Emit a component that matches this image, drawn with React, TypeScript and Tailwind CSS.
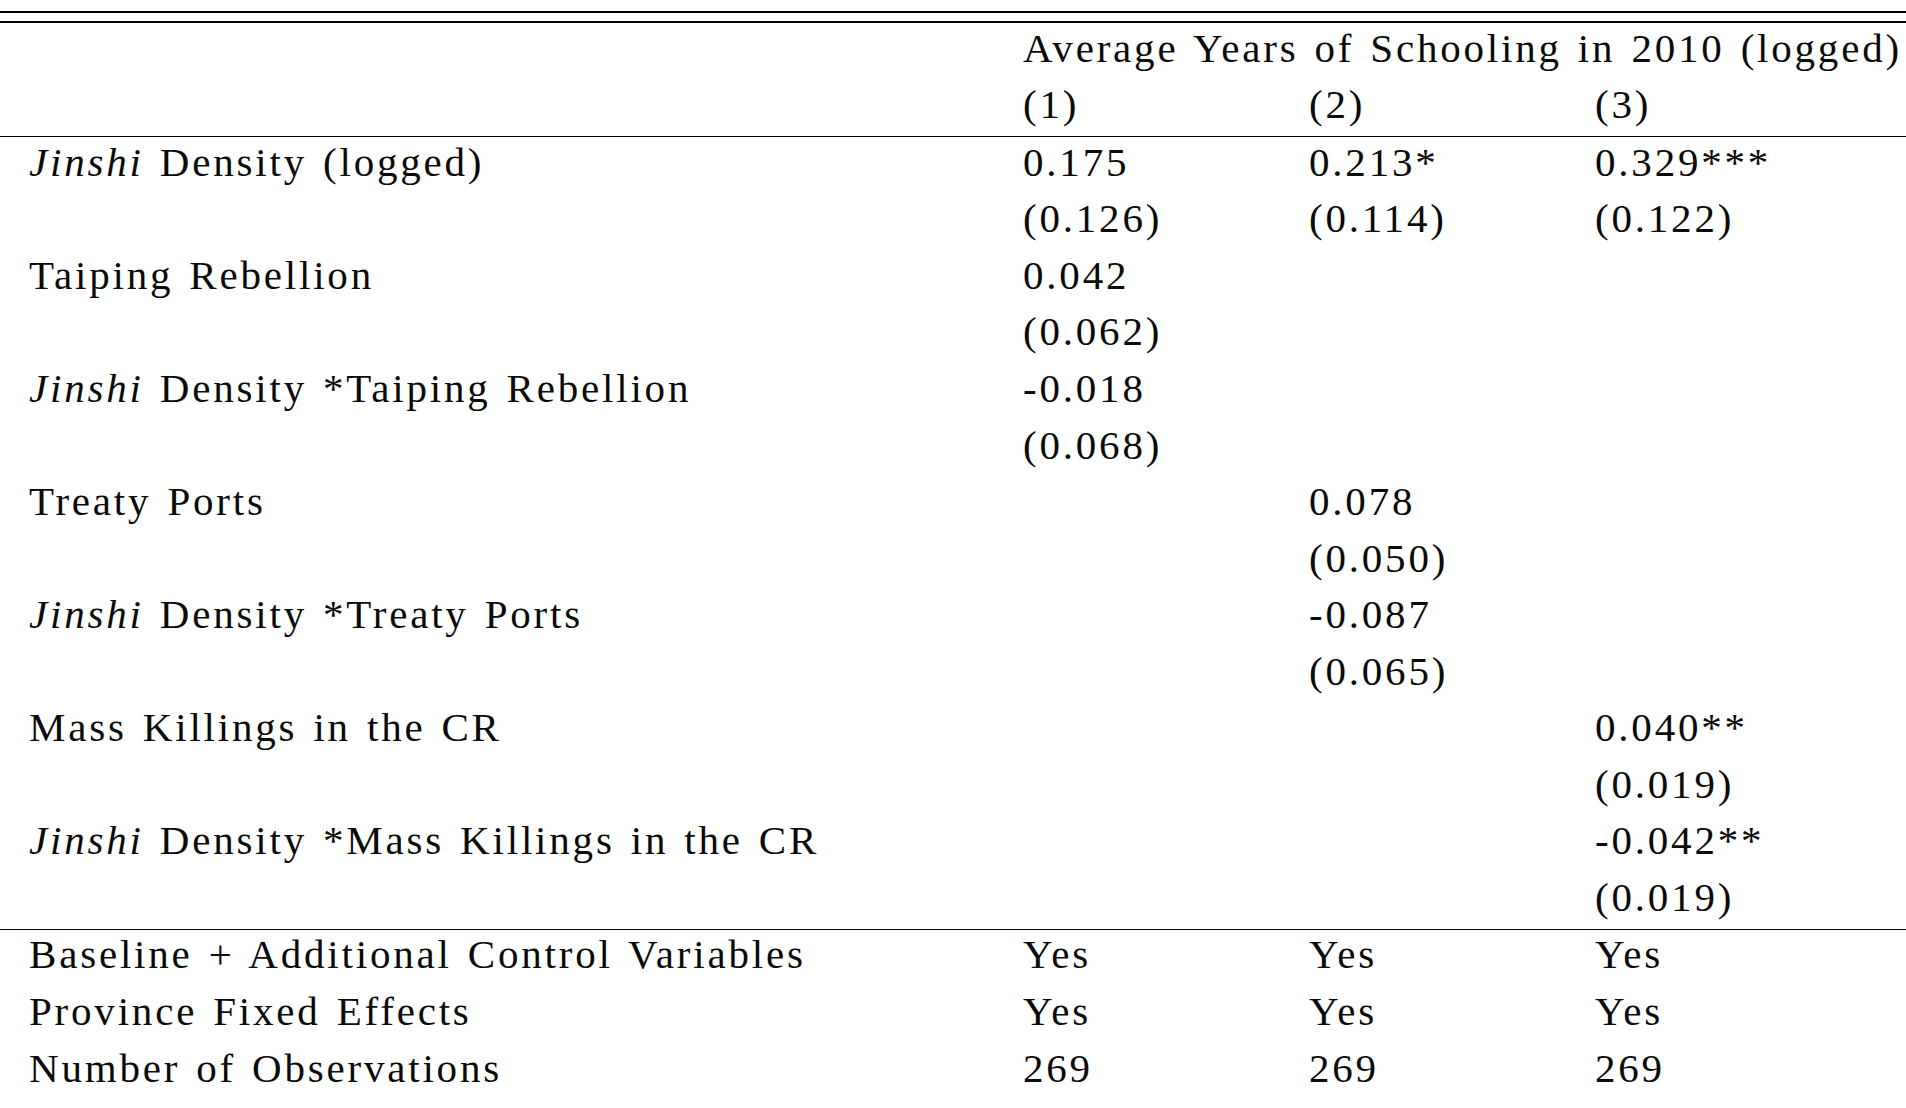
import React from "react";

type Row = { label: React.ReactNode; c: [string, string, string] };

const J = <i>Jinshi</i>;

const rows: Row[] = [
  { label: <>{J} Density (logged)</>, c: ["0.175", "0.213*", "0.329***"] },
  { label: "", c: ["(0.126)", "(0.114)", "(0.122)"] },
  { label: "Taiping Rebellion", c: ["0.042", "", ""] },
  { label: "", c: ["(0.062)", "", ""] },
  { label: <>{J} Density *Taiping Rebellion</>, c: ["-0.018", "", ""] },
  { label: "", c: ["(0.068)", "", ""] },
  { label: "Treaty Ports", c: ["", "0.078", ""] },
  { label: "", c: ["", "(0.050)", ""] },
  { label: <>{J} Density *Treaty Ports</>, c: ["", "-0.087", ""] },
  { label: "", c: ["", "(0.065)", ""] },
  { label: "Mass Killings in the CR", c: ["", "", "0.040**"] },
  { label: "", c: ["", "", "(0.019)"] },
  { label: <>{J} Density *Mass Killings in the CR</>, c: ["", "", "-0.042**"] },
  { label: "", c: ["", "", "(0.019)"] },
];

const bottom: Row[] = [
  { label: "Baseline + Additional Control Variables", c: ["Yes", "Yes", "Yes"] },
  { label: "Province Fixed Effects", c: ["Yes", "Yes", "Yes"] },
  { label: "Number of Observations", c: ["269", "269", "269"] },
  { label: "Adj. R-squared", c: ["0.536", "0.540", "0.546"] },
];

function TRow({ r }: { r: Row }) {
  return (
    <div className="grid grid-cols-[1023px_286px_286px_1fr] h-[56.55px] items-center pb-[6px]">
      <div className="pl-[29px] whitespace-nowrap">{r.label}</div>
      <div className="whitespace-nowrap">{r.c[0]}</div>
      <div className="whitespace-nowrap">{r.c[1]}</div>
      <div className="whitespace-nowrap">{r.c[2]}</div>
    </div>
  );
}

export default function App() {
  return (
    <div
      className="w-[1906px] h-[1108px] overflow-hidden bg-white text-[#0a0a0a] text-[41px] leading-none tracking-[2.8px] [word-spacing:3px]"
      style={{ fontFamily: '"Liberation Serif", serif' }}
    >
      <div className="h-[11px]" />
      <div className="h-[2px] bg-black" />
      <div className="h-[8px]" />
      <div className="h-[2px] bg-black" />
      <div className="grid grid-cols-[1023px_286px_286px_1fr] h-[56.5px] items-center pb-[6px]">
        <div />
        <div className="col-span-3 whitespace-nowrap">Average Years of Schooling in 2010 (logged)</div>
      </div>
      <div className="grid grid-cols-[1023px_286px_286px_1fr] h-[56.5px] items-center pb-[6px]">
        <div />
        <div>(1)</div>
        <div>(2)</div>
        <div>(3)</div>
      </div>
      <div className="h-px bg-black" />
      {rows.map((r, i) => (
        <TRow key={i} r={r} />
      ))}
      <div className="h-px bg-black" />
      {bottom.map((r, i) => (
        <TRow key={i} r={r} />
      ))}
    </div>
  );
}
